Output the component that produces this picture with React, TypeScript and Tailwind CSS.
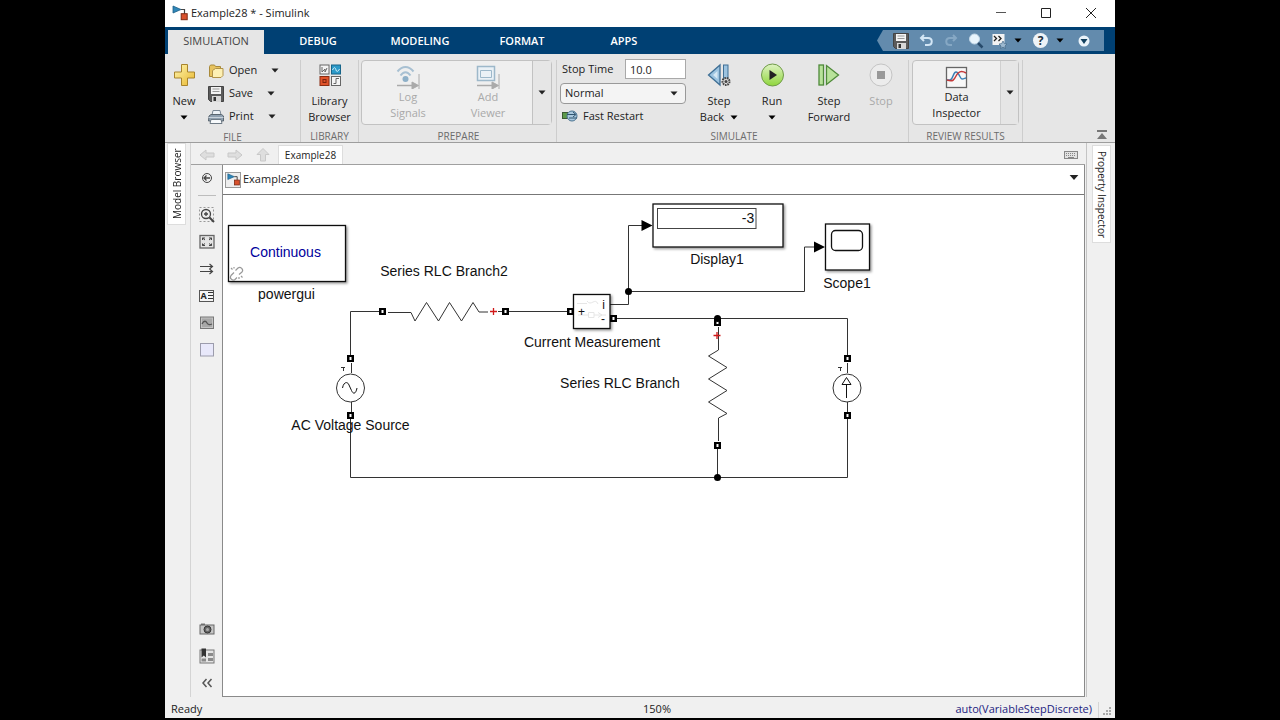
import { ReactNode } from "react";

interface PortProps {
  x: number;
  y: number;
}

function Caret({ className = "" }: { className?: string }) {
  return (
    <svg width="8" height="5" viewBox="0 0 8 5" className={`shrink-0 ${className}`} aria-hidden="true">
      <path d="M0.5 0.5h7L4 4.5z" fill="currentColor" />
    </svg>
  );
}

/* ---------- icons ---------- */

function ModelIcon({ size = 16 }: { size?: number }) {
  return (
    <svg width={size} height={size} viewBox="0 0 16 16" fill="none" aria-hidden="true">
      <path d="M1 1l8 3.5L1 8z" fill="#2f86b8" stroke="#1d5f88" strokeWidth="0.8" />
      <path d="M9 4.5h3.5V9" stroke="#444" strokeWidth="1.2" />
      <rect x="9.2" y="8.7" width="6" height="6" fill="#d9512c" stroke="#7e2a14" />
    </svg>
  );
}

function PlusIcon() {
  return (
    <svg width="24" height="24" viewBox="0 0 24 24" aria-hidden="true">
      <defs>
        <linearGradient id="plusFill" x1="0" y1="0" x2="1" y2="1">
          <stop offset="0" stopColor="#fff6b0" />
          <stop offset="1" stopColor="#e8b62c" />
        </linearGradient>
      </defs>
      <path d="M9.5 1.5h6v7.500h7v6h-7v7.500h-6v-7.500h-7V9h7z" fill="url(#plusFill)" stroke="#a8842c" />
    </svg>
  );
}

function FolderIcon() {
  return (
    <svg width="16" height="16" viewBox="0 0 16 16" aria-hidden="true">
      <path d="M1.500 13.500V3.500l1-1.500h4l1 1.500h5v10z" fill="#e7c35f" stroke="#a98a3a" />
      <path d="M4.500 7.500l3-2h7.500v7l-2 2h-8.500z" fill="#fdf0b4" stroke="#b0924a" />
    </svg>
  );
}

function DiskIcon() {
  return (
    <svg width="16" height="16" viewBox="0 0 16 16" aria-hidden="true">
      <path d="M0.500 0.500h15v15H2.500l-2-2z" fill="#5b5b5b" stroke="#444" />
      <rect x="3" y="1" width="10" height="7" fill="#f4f4f4" />
      <path d="M4.500 3h7M4.500 5.500h7" stroke="#999" />
      <rect x="4" y="10" width="9" height="6" fill="#d8d8d8" />
      <rect x="5.500" y="11" width="2.500" height="4" fill="#333" />
    </svg>
  );
}

function PrinterIcon() {
  return (
    <svg width="16" height="16" viewBox="0 0 16 16" aria-hidden="true">
      <path d="M4 6l1-4.500h7L13 6" fill="#eef3f8" stroke="#7a8794" />
      <path d="M1 7l2-1.500h10.500L15.500 7v5H0.500z" fill="#8fa0b0" stroke="#5a6670" />
      <path d="M0.500 8.500h15" stroke="#c9d3dc" />
      <path d="M3 10.500h10l1 4H2z" fill="#f7fafc" stroke="#6f7b86" />
    </svg>
  );
}

function LibraryIcon() {
  return (
    <svg width="24" height="24" viewBox="0 0 24 24" fill="none" aria-hidden="true">
      <rect x="2" y="2" width="9" height="9" fill="#f4f4f4" stroke="#666" />
      <path d="M4 9V4M4 9l3-3v3l2-4" stroke="#666" />
      <rect x="13.500" y="2" width="9" height="9" fill="#2c9ac9" stroke="#17658a" />
      <path d="M14.500 7c2-4 3-2 3.500 0s2 2 3.500-1" stroke="#d6f0fb" />
      <rect x="2" y="13.500" width="9" height="9" fill="#e0532a" stroke="#8a2d12" />
      <rect x="5" y="16.500" width="3" height="3" stroke="#7a240e" />
      <rect x="13.500" y="13.500" width="9" height="9" fill="#f4f4f4" stroke="#666" />
      <path d="M15.500 20.500H18v-5h3" stroke="#666" />
    </svg>
  );
}

function LogSignalsIcon() {
  return (
    <svg width="24" height="24" viewBox="0 0 24 24" fill="none" aria-hidden="true">
      <path d="M1.500 6.500c5-6 11-6 16 0" stroke="#a8c0d2" strokeWidth="2" />
      <path d="M4.500 10.500c3-4.500 7-4.500 10 0" stroke="#a8c0d2" strokeWidth="2" />
      <circle cx="9.500" cy="14" r="3" fill="#8eb0c8" />
      <path d="M1 20.500h16" stroke="#aaa" strokeWidth="1.500" />
      <path d="M16 17l6.500 3.500L16 24zM23 9v15" fill="#aaa" stroke="#aaa" />
    </svg>
  );
}

function AddViewerIcon() {
  return (
    <svg width="24" height="24" viewBox="0 0 24 24" fill="none" aria-hidden="true">
      <rect x="1.500" y="1.500" width="17" height="14" fill="#eaf1f6" stroke="#9db8ca" strokeWidth="1.500" />
      <path d="M4.500 5.500h11v7h-11z" stroke="#9db8ca" />
      <path d="M1 20.500h16" stroke="#aaa" strokeWidth="1.500" />
      <path d="M16 17l6.500 3.500L16 24zM23 9v15" fill="#aaa" stroke="#aaa" />
    </svg>
  );
}

function StepBackIcon() {
  return (
    <svg width="24" height="24" viewBox="0 0 24 24" aria-hidden="true">
      <path d="M13 2v20L1.500 12z" fill="#9cc3e0" stroke="#3f6f95" strokeWidth="1.300" />
      <path d="M10.500 8v8L6 12z" fill="#d6e8f4" />
      <rect x="16.500" y="2" width="4.500" height="15" fill="#9cc3e0" stroke="#3f6f95" />
      <circle cx="19" cy="18.500" r="3.500" fill="#ddd" stroke="#444" strokeWidth="2" strokeDasharray="1.600 0.800" />
      <circle cx="19" cy="18.500" r="1.500" fill="#444" />
    </svg>
  );
}

function RunIcon() {
  return (
    <svg width="24" height="24" viewBox="0 0 24 24" aria-hidden="true">
      <defs>
        <linearGradient id="runFill" x1="0" y1="0" x2="0" y2="1">
          <stop offset="0" stopColor="#dff3c4" />
          <stop offset="1" stopColor="#8fd63c" />
        </linearGradient>
      </defs>
      <circle cx="12.500" cy="12" r="11" fill="url(#runFill)" stroke="#6f9a48" />
      <path d="M9.500 7v10l7.500-5z" fill="#222" />
    </svg>
  );
}

function StepForwardIcon() {
  return (
    <svg width="24" height="24" viewBox="0 0 24 24" fill="#b8e29a" stroke="#4f8a3a" strokeWidth="1.300" aria-hidden="true">
      <rect x="2" y="2" width="4.500" height="20" />
      <path d="M9.500 2.500v19L21.500 12z" />
    </svg>
  );
}

function StopIcon() {
  return (
    <svg width="24" height="24" viewBox="0 0 24 24" aria-hidden="true">
      <circle cx="12" cy="12" r="11" fill="#ececec" stroke="#c4c4c4" />
      <rect x="8" y="8" width="8" height="8" fill="#999" />
    </svg>
  );
}

function InspectorIcon() {
  return (
    <svg width="24" height="24" viewBox="0 0 24 24" fill="none" aria-hidden="true">
      <rect x="1.500" y="2.500" width="20" height="20" fill="#f8f8f8" stroke="#666" strokeWidth="1.300" />
      <path d="M2 15h3c3 0 3-8 6-8s4 7 6 7 3-1 4-1" stroke="#3a7fb5" strokeWidth="1.500" />
      <path d="M2 15c6 2 7 0 9-4s5-6 10-3" stroke="#c43a3a" strokeWidth="1.500" />
    </svg>
  );
}

function FastRestartIcon() {
  return (
    <svg width="16" height="14" viewBox="0 0 16 14" fill="none" aria-hidden="true">
      <rect x="0.500" y="3.500" width="5" height="6" fill="#5c9a4a" stroke="#3b5a34" />
      <circle cx="10" cy="7" r="5" fill="#a9c8de" stroke="#4a7391" />
      <path d="M5 5.500h8M11 3l3 2.500L11 8M15 9H7" stroke="#2f546e" />
    </svg>
  );
}

/* ---------- ribbon ---------- */

function RibbonSection({ title, className = "", children }: { title: string; className?: string; children: ReactNode }) {
  return (
    <section className={`flex shrink-0 flex-col border-r border-[#cdcdcd] ${className}`}>
      <div className="flex flex-1">{children}</div>
      <h2 className="h-[14px] text-center text-[10px] leading-4 text-[#6c6c6c]">{title}</h2>
    </section>
  );
}

interface BigButtonProps {
  icon: ReactNode;
  lines: string[];
  caret?: boolean;
  disabled?: boolean;
  className: string;
}

function BigButton({ icon, lines, caret, disabled, className }: BigButtonProps) {
  return (
    <button
      disabled={disabled}
      className={`flex shrink-0 flex-col items-center leading-4 disabled:text-[#a9a9a9] ${className}`}
    >
      {icon}
      <span className="mt-auto flex flex-col items-center">
        {lines.map((line, i) => (
          <span key={line} className="flex h-4 items-center gap-1.5 whitespace-nowrap">
            {line}
            {caret && lines.length > 1 && i === lines.length - 1 && <Caret className="text-black" />}
          </span>
        ))}
        {lines.length === 1 && <span className="flex h-4 items-center">{caret && <Caret className="text-black" />}</span>}
      </span>
    </button>
  );
}

const fileActions = [
  { label: "Open", icon: <FolderIcon /> },
  { label: "Save", icon: <DiskIcon /> },
  { label: "Print", icon: <PrinterIcon /> },
];

function Ribbon() {
  return (
    <div className="flex h-[89px] shrink-0 overflow-hidden border-b border-[#9d9d9d] bg-[#e6e6e6] pt-1.5">
      <RibbonSection title="FILE" className="w-[136px]">
        <BigButton icon={<PlusIcon />} lines={["New"]} caret className="h-[65px] w-[38px] pt-[3px]" />
        <div className="ml-[5px] flex flex-col">
          {fileActions.map((action) => (
            <button key={action.label} className="flex h-[23px] items-center gap-3.5 pb-0.5">
              <span className="flex items-center gap-[5px]">
                {action.icon}
                {action.label}
              </span>
              <Caret />
            </button>
          ))}
        </div>
      </RibbonSection>

      <RibbonSection title="LIBRARY" className="w-[58px]">
        <BigButton icon={<LibraryIcon />} lines={["Library", "Browser"]} className="h-[65px] w-full pt-[3px]" />
      </RibbonSection>

      <RibbonSection title="PREPARE" className="w-[198px] pl-0.5">
        <div className="flex h-[65px] rounded-sm border border-[#c2c2c2] bg-[#efefef] pl-1.5">
          <BigButton icon={<LogSignalsIcon />} lines={["Log", "Signals"]} disabled className="w-20 pt-1 pb-[3px]" />
          <BigButton icon={<AddViewerIcon />} lines={["Add", "Viewer"]} disabled className="w-20 pt-1 pb-[3px]" />
          <button aria-label="More prepare tools" className="ml-1 flex w-[19px] shrink-0 items-center justify-center border-l border-[#c2c2c2] bg-[#e6e6e6]">
            <Caret />
          </button>
        </div>
      </RibbonSection>

      <RibbonSection title="SIMULATE" className="w-[352px] pl-[3px]">
        <div className="flex w-[126px] flex-col">
          <div className="-mt-px flex h-5 items-center justify-between">
            <label htmlFor="stop-time" className="pl-0.5">Stop Time</label>
            <input
              id="stop-time"
              defaultValue="10.0"
              className="h-5 w-[61px] border border-[#a9a9a9] bg-white px-1 outline-none"
            />
          </div>
          <div className="relative mt-1">
            <select
              aria-label="Simulation mode"
              className="block h-[21px] w-full appearance-none rounded border border-[#999] bg-[#f4f4f4] px-1 outline-none"
            >
              <option>Normal</option>
            </select>
            <Caret className="pointer-events-none absolute top-2 right-2" />
          </div>
          <button className="mt-1 flex h-4 items-center gap-[5px] pl-0.5">
            <FastRestartIcon />
            Fast Restart
          </button>
        </div>
        <div className="ml-1.5 flex h-[65px]">
          <BigButton icon={<StepBackIcon />} lines={["Step", "Back"]} caret className="w-[54px] pt-[3px]" />
          <BigButton icon={<RunIcon />} lines={["Run"]} caret className="w-[52px] pt-[3px]" />
          <BigButton icon={<StepForwardIcon />} lines={["Step", "Forward"]} className="w-[62px] pt-[3px]" />
          <BigButton icon={<StopIcon />} lines={["Stop"]} disabled className="w-[42px] pt-[3px]" />
        </div>
      </RibbonSection>

      <RibbonSection title="REVIEW RESULTS" className="w-[114px] px-[3px]">
        <div className="flex h-[65px] w-full rounded-sm border border-[#c2c2c2] bg-[#efefef]">
          <BigButton icon={<InspectorIcon />} lines={["Data", "Inspector"]} className="w-[87px] pt-1 pb-[3px]" />
          <button aria-label="More review tools" className="flex flex-1 items-center justify-center border-l border-[#d0d0d0] bg-[#e6e6e6]">
            <Caret />
          </button>
        </div>
      </RibbonSection>

      <button aria-label="Minimize toolstrip" className="mr-2 mb-0.5 ml-auto self-end">
        <svg width="10" height="10" viewBox="0 0 10 10" fill="#777">
          <path d="M0 0h10v2H0zM5 3l5 6H0z" />
        </svg>
      </button>
    </div>
  );
}

/* ---------- window chrome ---------- */

function TitleBar() {
  return (
    <header className="flex h-[27px] shrink-0 items-center bg-white pr-0.5 pb-px pl-[7px]">
      <ModelIcon />
      <h1 className="ml-[3px]">Example28 * - Simulink</h1>
      <div className="ml-auto flex h-full">
        <button aria-label="Minimize" className="flex w-[45px] items-center justify-center">
          <svg width="10" height="10" stroke="#555"><path d="M0 4.500h10" /></svg>
        </button>
        <button aria-label="Maximize" className="flex w-[45px] items-center justify-center">
          <svg width="10" height="10" fill="none" stroke="#222"><path d="M0.500 0.500h9v9h-9z" /></svg>
        </button>
        <button aria-label="Close" className="flex w-[45px] items-center justify-center">
          <svg width="10" height="10" stroke="#222"><path d="M0 0l10 10M10 0L0 10" /></svg>
        </button>
      </div>
    </header>
  );
}

const tabs = ["DEBUG", "MODELING", "FORMAT", "APPS"];

function TabBar() {
  return (
    <nav className="flex h-[27px] shrink-0 items-end bg-[#004073] pl-[3px] text-white">
      <button className="mr-[3px] h-6 w-24 bg-[#e6e6e6] pb-0.5 text-[#444]">SIMULATION</button>
      {tabs.map((tab) => (
        <button key={tab} className="h-6 w-[102px] pb-0.5 font-semibold">
          {tab}
        </button>
      ))}
      <div className="mr-[11px] mb-[3px] ml-auto flex h-[21px] w-[227px] items-center bg-[#638bad] pl-4 text-black [clip-path:polygon(6px_0,100%_0,100%_100%,6px_100%,0_50%)]">
        <button aria-label="Save"><DiskIcon /></button>
        <button aria-label="Undo" className="ml-2.5">
          <svg width="15" height="14" viewBox="0 0 15 14" fill="none" stroke="#d3e6f5" strokeWidth="2">
            <path d="M5 1L2 4l3 3M2 4h7c5 0 5 7 0 7H6" />
          </svg>
        </button>
        <button aria-label="Redo" disabled className="ml-2.5">
          <svg width="14" height="14" viewBox="0 0 14 14" fill="none" stroke="#86a8c4" strokeWidth="2">
            <path d="M9 1l3 3-3 3M12 4H6c-5 0-5 7 0 7h2" />
          </svg>
        </button>
        <button aria-label="Find" className="ml-2.5">
          <svg width="16" height="16" viewBox="0 0 16 16">
            <path d="M9.500 9.500l5 5" stroke="#274a6b" strokeWidth="2.500" />
            <circle cx="6.500" cy="6" r="5" fill="#e8f4fc" stroke="#c3d8e8" />
          </svg>
        </button>
        <button aria-label="Favorites" className="ml-2 flex items-center gap-1.5">
          <svg width="16" height="16" viewBox="0 0 16 16" fill="none">
            <rect x="0.500" y="1" width="12" height="11" fill="#f3f3f3" />
            <path d="M2 3l2.500 2.500L2 8M6.500 3L9 5.500 6.500 8" stroke="#222" strokeWidth="1.300" />
            <path d="M11 8l1.300 2.600 2.700.4-2 2 .5 2.500-2.500-1.300L8.500 15.500 9 13l-2-2 2.700-.4z" fill="#9db9d0" stroke="#466a88" strokeWidth="0.700" />
          </svg>
          <Caret />
        </button>
        <button aria-label="Help" className="ml-[11px] flex items-center gap-2">
          <span className="flex size-[15px] items-center justify-center rounded-full bg-[#eef3f7] text-xs leading-none font-bold text-[#23313d]">?</span>
          <Caret />
        </button>
        <button aria-label="Customize" className="ml-[14px]">
          <svg width="12" height="12" viewBox="0 0 12 12">
            <circle cx="6" cy="6" r="5.500" fill="#eaf3fa" />
            <path d="M2.500 4h7L6 9z" fill="#12405f" />
          </svg>
        </button>
      </div>
    </nav>
  );
}

const navArrows = [
  { label: "Back", path: "M1 7l6-5v3h8v4H7v3z" },
  { label: "Forward", path: "M15 7L9 2v3H1v4h8v3z" },
  { label: "Up", path: "M8 0.500l6 6h-3.500V13h-5V6.500H2z" },
];

const paletteTools = [
  {
    label: "Zoom",
    icon: (
      <svg width="16" height="16" viewBox="0 0 16 16" fill="none" stroke="#444">
        <path d="M0.500 0.500h14v14H0.500z" strokeDasharray="2 2" stroke="#999" />
        <circle cx="7" cy="7" r="4.500" fill="#eee" strokeWidth="1.300" />
        <path d="M5 7h4M7 5v4" strokeWidth="1.300" />
        <path d="M10.500 10.500l4.500 4.500" strokeWidth="2" />
      </svg>
    ),
  },
  {
    label: "Fit to view",
    icon: (
      <svg width="16" height="16" viewBox="0 0 16 16" fill="none" stroke="#444">
        <rect x="1" y="1.500" width="14" height="12.500" fill="#e4e4e4" stroke="#666" strokeWidth="1.300" />
        <path d="M3.500 6V4H6M3.500 4l2.500 2M10 4h2.500v2M12.500 4L10 6M3.500 9.500v2H6M3.500 11.500l2.500-2M10 11.500h2.500v-2M12.500 11.500l-2.500-2" />
      </svg>
    ),
  },
  {
    label: "Show sample time",
    icon: (
      <svg width="16" height="16" viewBox="0 0 16 16" fill="none" stroke="#444" strokeWidth="1.200">
        <path d="M1 5.500h12.500M10.500 3l3 2.500-3 2.500M1 10.500h12.500M10.500 8l3 2.500-3 2.500" />
      </svg>
    ),
  },
  {
    label: "Annotation",
    icon: (
      <span className="flex h-3 w-[15px] items-center justify-center gap-px border border-[#555] bg-[#f4f4f4] text-[9px] leading-none font-bold text-[#222]">
        A
        <svg width="5" height="7" viewBox="0 0 5 7" stroke="#333"><path d="M0 0.500h5M0 3.500h5M0 6.500h5" /></svg>
      </span>
    ),
  },
  {
    label: "Image",
    icon: (
      <svg width="16" height="16" viewBox="0 0 16 16" fill="none">
        <rect x="1.500" y="2" width="13" height="11.500" fill="#c4c4c4" stroke="#777" />
        <rect x="3" y="3.500" width="10" height="8.500" fill="#a8a8a8" />
        <path d="M3 9c2-4 4-3 5-1s3 2 5 1" stroke="#555" strokeWidth="1.300" />
      </svg>
    ),
  },
  {
    label: "Area",
    icon: (
      <svg width="16" height="16" viewBox="0 0 16 16">
        <rect x="1.500" y="1.500" width="13" height="12.500" fill="#e8e8fa" stroke="#9c9cac" />
      </svg>
    ),
  },
];

const bottomTools = [
  {
    label: "Screenshot",
    icon: (
      <svg width="16" height="16" viewBox="0 0 16 16" fill="none">
        <path d="M2 2.500h4v2H2z" fill="#777" />
        <rect x="1" y="4" width="14" height="9" fill="#c6c6c6" stroke="#666" />
        <circle cx="8.500" cy="8.500" r="3.500" fill="#666" stroke="#333" />
        <circle cx="8.500" cy="8.500" r="1.500" fill="#aaa" />
      </svg>
    ),
  },
  {
    label: "Model data",
    icon: (
      <svg width="16" height="16" viewBox="0 0 16 16">
        <rect x="1" y="2" width="14" height="13" fill="#e4e4e4" stroke="#777" />
        <path d="M9 5h5v3H9zM9 10h5v3H9zM2.500 10.500H7v3H2.500z" fill="#8a8a8a" />
        <path d="M2.500 0.500H7v9L4.800 7.500 2.500 9.500z" fill="#333" />
      </svg>
    ),
  },
  {
    label: "Hide palette",
    icon: (
      <svg width="16" height="16" viewBox="0 0 16 16" fill="none" stroke="#555" strokeWidth="1.500">
        <path d="M7.500 4L4 8l3.500 4M12.500 4L9 8l3.500 4" />
      </svg>
    ),
  },
];

function Palette() {
  return (
    <aside className="flex w-[31px] shrink-0 flex-col items-center pt-1 pb-px">
      <button aria-label="Hide explorer bar" className="flex h-[18px] items-center">
        <svg width="12" height="12" viewBox="0 0 12 12" fill="none" stroke="#444">
          <circle cx="6" cy="6" r="4.500" />
          <path d="M9 6H3.500M5.500 3.500L3 6l2.500 2.500" strokeWidth="1.300" />
        </svg>
      </button>
      <div className="mt-2 h-px w-[18px] bg-[#bdbdbd]" />
      <div className="mt-[5px] flex flex-col">
        {paletteTools.map((tool) => (
          <button key={tool.label} aria-label={tool.label} className="flex h-[27px] w-4 items-center justify-center">
            {tool.icon}
          </button>
        ))}
      </div>
      <div className="mt-auto flex flex-col">
        {bottomTools.map((tool) => (
          <button key={tool.label} aria-label={tool.label} className="flex h-[27px] w-4 items-center justify-center">
            {tool.icon}
          </button>
        ))}
      </div>
    </aside>
  );
}

/* ---------- diagram ---------- */

function Port({ x, y }: PortProps) {
  return (
    <g stroke="none">
      <rect x={x - 3.5} y={y - 3.5} width="7" height="7" fill="#000" />
      <rect x={x - 1} y={y - 1.5} width="2" height="3" fill="#fff" />
    </g>
  );
}

const ports = [
  [382.5, 311.5], [505.5, 311.5], [570.5, 311.5], [613.5, 318.5], [350.5, 358.5],
  [350.5, 415.5], [717.5, 322.5], [717.5, 445.5], [847.5, 358.5], [847.5, 415.5],
];

const blockLabels = [
  { text: "powergui", x: 286.5, y: 299 },
  { text: "Series RLC Branch2", x: 444, y: 276 },
  { text: "Current Measurement", x: 592, y: 347 },
  { text: "Series RLC Branch", x: 620, y: 388 },
  { text: "AC Voltage Source", x: 350.5, y: 430 },
  { text: "Display1", x: 717, y: 264 },
  { text: "Scope1", x: 847, y: 288 },
];

function Diagram() {
  return (
    <svg
      width="862"
      height="501"
      viewBox="223 195 862 501"
      fill="none"
      stroke="#333"
      className="block"
      fontFamily="'Liberation Sans', Arial, sans-serif"
      fontSize="14"
    >
      <defs>
        <filter id="shadow" x="-10%" y="-10%" width="130%" height="130%">
          <feDropShadow dx="1.5" dy="1.5" stdDeviation="1" floodColor="#000" floodOpacity="0.4" />
        </filter>
      </defs>

      {/* wires */}
      <path d="M350.500 355v-43.500H380M509 311.500h58M350.500 419v58.500h497V419M617 318.500h230.500V355M717.500 449v28" />
      <path d="M610 304.500h18.500v-79H644M628.500 291.500h176V247H815" />
      <path d="M641.500 220v11l11-5.500zM814 241.500v11l11-5.500z" fill="#000" stroke="none" />

      {/* blocks */}
      <g fill="#fff" stroke="#111" strokeWidth="1.300" filter="url(#shadow)">
        <rect x="228.500" y="225.500" width="117" height="56" />
        <rect x="653" y="204" width="130" height="43" />
        <rect x="825.500" y="224" width="44" height="46" />
        <rect x="573.500" y="294.500" width="36.500" height="34" />
      </g>
      <rect x="657.500" y="208.500" width="98.500" height="20" stroke="#444" />
      <rect x="831.500" y="230.500" width="31" height="20" rx="4" stroke="#111" strokeWidth="1.300" />
      <path d="M577 303.500h10M587 301c4 6 8-4 11 3M578 315h10.500M594 315h12M588.500 312.500h5.500v5h-5.500zM598 312.500l4 2.500-4 2.500" stroke="#e6e6e6" />

      {/* broken library link */}
      <g stroke="#999" strokeWidth="1.200">
        <path d="M235.500 270.500l2.500-2.500c2.500-2 6 1.500 4 4l-3 2.500M234 272.500l-3 3c-2 2.500 1.500 6 4 4l2-2" />
        <path d="M231 268l1.500 1.500M234 267v1.500M239 277v2M241 276l1.500 1.500" />
      </g>

      {/* horizontal resistor */}
      <path d="M388 312.500h23l4 8.500 11.500-18.500 12 18.500 11-18.500 12 18.500 11.500-18.500 6 9.500h9M498 311.500h4" />
      {/* vertical resistor */}
      <path d="M718.500 327v23l-10 6 18.500 11.500-18.500 11.500 18.500 11.500-18.500 11.500 18.500 11.500-8.500 4.500v23" />
      <path d="M490 311.500h7M493.500 308v7M713.500 335.500h7M717 332v7" stroke="#d01818" strokeWidth="1.300" />

      {/* AC source */}
      <path d="M351.500 363v10M351.500 402v10M341 367.500h4M343.500 367v4" />
      <circle cx="350.500" cy="388" r="14" />
      <path d="M342.500 388c1-6 5-7 6.500-3l2.500 5.500c2 4.500 4.500 3 5.500-2.500" stroke="#111" />

      {/* current source */}
      <path d="M847.500 363v10M847.500 402v10M838 367.500h4M840.500 367v4" />
      <circle cx="847" cy="388" r="14" />
      <path d="M846.500 398v-13.500M842 384.500h9l-4.500-7z" stroke="#111" />

      {ports.map(([x, y]) => (
        <Port key={`${x}-${y}`} x={x} y={y} />
      ))}
      <g fill="#000" stroke="none">
        <circle cx="628.500" cy="291.500" r="3.500" />
        <circle cx="717.500" cy="318.500" r="3.500" />
        <circle cx="717.500" cy="477.500" r="3.500" />
      </g>

      <g fill="#111" stroke="none" textAnchor="middle">
        {blockLabels.map((label) => (
          <text key={label.text} x={label.x} y={label.y}>{label.text}</text>
        ))}
        <text x="285.500" y="257" fill="#00009c">Continuous</text>
        <text x="748" y="223">-3</text>
        <text x="581.500" y="316" fontSize="12">+</text>
        <text x="603.500" y="309" fontSize="12">i</text>
        <text x="603" y="323" fontSize="12">-</text>
      </g>
    </svg>
  );
}

function Editor() {
  return (
    <main className="flex min-w-0 flex-1 flex-col border-r border-[#c4c4c4] pr-px">
      <div className="flex h-[22px] shrink-0 items-end border-b border-[#a0a0a0] pl-2">
        <div className="flex h-[19px] w-[79px] items-center gap-3">
          {navArrows.map((arrow) => (
            <button key={arrow.label} aria-label={arrow.label} disabled>
              <svg width="16" height="14" viewBox="0 0 16 14" fill="#dedede" stroke="#c8c8c8">
                <path d={arrow.path} />
              </svg>
            </button>
          ))}
        </div>
        <button className="h-[19px] w-[65px] border border-b-0 border-[#ddd] bg-white text-[10px] leading-4">Example28</button>
        <button aria-label="Keyboard shortcuts" className="mr-[7px] mb-1 ml-auto">
          <svg width="14" height="10" viewBox="0 0 14 10" fill="none" stroke="#888">
            <rect x="0.500" y="1.500" width="13" height="7" fill="#e2e2e2" />
            <path d="M2 3.500h10M2 5.500h10" strokeDasharray="1 1" />
            <path d="M4 7.500h6" />
          </svg>
        </button>
      </div>
      <div className="flex min-h-0 flex-1">
        <Palette />
        <div className="flex min-w-0 flex-1 flex-col border-x border-b border-[#8a8a8a] bg-white">
          <div className="flex h-[30px] shrink-0 items-center border-b border-[#777] pr-1.5 pl-0.5">
            <span className="flex size-4 items-center justify-center border border-[#999] bg-[#eee]">
              <ModelIcon size={13} />
            </span>
            <span className="ml-0.5">Example28</span>
            <button aria-label="Model path" className="mb-1 ml-auto"><Caret className="scale-125" /></button>
          </div>
          <div className="min-h-0 flex-1 overflow-hidden">
            <Diagram />
          </div>
        </div>
      </div>
    </main>
  );
}

function StatusBar() {
  return (
    <footer className="flex h-[21px] shrink-0 items-center pt-1 pl-1.5">
      <span className="flex-1">Ready</span>
      <span className="pl-7">150%</span>
      <span className="flex flex-1 items-center justify-end">
        <a href="#solver" className="text-[#1c1c80]">auto(VariableStepDiscrete)</a>
        <span className="ml-1.5 h-4 w-px bg-[#d5d5d5]" />
        <svg width="9" height="9" viewBox="0 0 9 9" fill="#aaa" className="mt-1 mr-[3px] ml-1">
          <path d="M6 0h2v2H6zM3 3h2v2H3zM6 3h2v2H6zM0 6h2v2H0zM3 6h2v2H3zM6 6h2v2H6z" />
        </svg>
      </span>
    </footer>
  );
}

export default function App() {
  return (
    <div className="h-screen bg-black px-[165px] pb-0.5 font-['Open_Sans','Noto_Sans',sans-serif] text-[11px] text-[#222]">
      <div className="flex h-full flex-col overflow-hidden bg-[#f0f0f0]">
        <TitleBar />
        <TabBar />
        <Ribbon />
        <div className="flex min-h-0 flex-1">
          <div className="w-[26px] shrink-0 border-r border-[#d4d4d4] pl-0.5">
            <button className="h-[82px] w-[19px] rotate-180 border border-[#ddd] bg-white text-[10px] leading-4 whitespace-nowrap [writing-mode:vertical-rl]">
              Model Browser
            </button>
          </div>
          <Editor />
          <div className="w-7 shrink-0 pt-0.5 pl-[5px]">
            <button className="h-[98px] w-[19px] border border-[#ddd] bg-white text-[10px] leading-4 whitespace-nowrap [writing-mode:vertical-rl]">
              Property Inspector
            </button>
          </div>
        </div>
        <StatusBar />
      </div>
    </div>
  );
}
